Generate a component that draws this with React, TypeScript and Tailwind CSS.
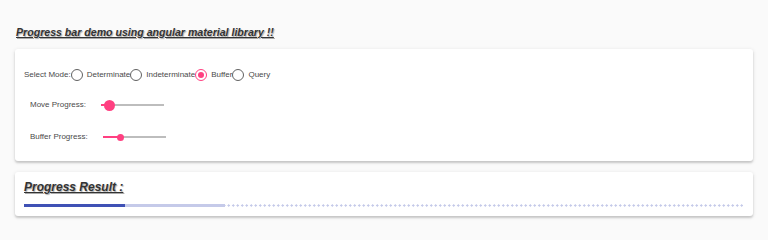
import { useState } from 'react'

const modes = ['Determinate', 'Indeterminate', 'Buffer', 'Query']

function Radio({ checked }: { checked: boolean }) {
  return (
    <span
      className={`inline-flex items-center justify-center w-[12px] h-[12px] rounded-full border-[1.5px] ${
        checked ? 'border-[#ff4081]' : 'border-[#616161]'
      }`}
    >
      {checked && <span className="w-[6px] h-[6px] rounded-full bg-[#ff4081]" />}
    </span>
  )
}

function Slider({ value, big }: { value: number; big?: boolean }) {
  return (
    <div className="relative w-[63px] h-[12px] flex items-center">
      <div className="absolute left-0 right-0 h-[2px] bg-[#bdbdbd]" />
      <div className="absolute left-0 h-[2px] bg-[#ff4081]" style={{ width: `${value}%` }} />
      <div
        className={`absolute rounded-full bg-[#ff4081] ${big ? 'w-[11px] h-[11px] -ml-[5.5px]' : 'w-[7px] h-[7px] -ml-[3.5px]'}`}
        style={{ left: `${value}%` }}
      />
    </div>
  )
}

export default function App() {
  const [mode] = useState('Buffer')

  return (
    <div className="min-h-screen bg-[#fafafa] px-[15px] pt-[25px] text-[#4a4a4a] font-['Liberation_Sans',Arial,sans-serif]">
      {/* Title */}
      <h1 className="ml-px text-[10.6px] leading-[14px] font-bold italic underline text-[#333] [text-shadow:1px_1px_1px_#aaa]">
        Progress bar demo using angular material library !!
      </h1>

      {/* Controls card */}
      <div className="mt-[10px] bg-white rounded-[3px] shadow-[0_2px_2px_rgba(0,0,0,0.14),0_1px_4px_rgba(0,0,0,0.12)] px-[9px] pt-[20px] pb-[18px] text-[8px]">
        <div className="flex items-center h-[12px]">
          <span>Select Mode:</span>
          {modes.map((m) => (
            <label key={m} className="flex items-center">
              <Radio checked={mode === m} />
              <span className="ml-[4px]">{m}</span>
            </label>
          ))}
        </div>

        <div className="flex items-center mt-[18px] pl-[6px]">
          <span className="w-[71px]">Move Progress:</span>
          <Slider value={13} big />
        </div>

        <div className="flex items-center mt-[20px] pl-[6px]">
          <span className="w-[73px]">Buffer Progress:</span>
          <Slider value={28} />
        </div>
      </div>

      {/* Result card */}
      <div className="mt-[11px] bg-white rounded-[3px] shadow-[0_2px_2px_rgba(0,0,0,0.14),0_1px_4px_rgba(0,0,0,0.12)] px-[9px] pt-[8px] pb-[9px]">
        <h2 className="text-[12px] leading-[14px] font-bold italic underline text-[#333] [text-shadow:1px_1px_1px_#aaa]">
          Progress Result :
        </h2>
        <div className="relative mt-[10px] h-[3px] mr-px">
          <div className="absolute inset-0 bg-[radial-gradient(circle,#c5cae9_1px,transparent_1.2px)] bg-[length:4.5px_3px]" />
          <div className="absolute left-0 top-0 h-full w-[28%] bg-[#c5cae9]" />
          <div className="absolute left-0 top-0 h-full w-[14%] bg-[#3f51b5]" />
        </div>
      </div>
    </div>
  )
}
